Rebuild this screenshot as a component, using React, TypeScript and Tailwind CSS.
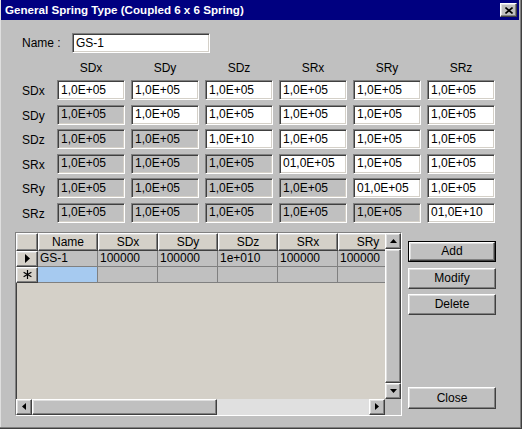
import React from 'react'

const font = { fontFamily: '"Liberation Sans", Arial, sans-serif' }

const LABELS = ['SDx', 'SDy', 'SDz', 'SRx', 'SRy', 'SRz']

// Matrix values, row by row. Cells below the diagonal are read-only (grey).
const VALUES: string[][] = [
  ['1,0E+05', '1,0E+05', '1,0E+05', '1,0E+05', '1,0E+05', '1,0E+05'],
  ['1,0E+05', '1,0E+05', '1,0E+05', '1,0E+05', '1,0E+05', '1,0E+05'],
  ['1,0E+05', '1,0E+05', '1,0E+10', '1,0E+05', '1,0E+05', '1,0E+05'],
  ['1,0E+05', '1,0E+05', '1,0E+05', '01,0E+05', '1,0E+05', '1,0E+05'],
  ['1,0E+05', '1,0E+05', '1,0E+05', '1,0E+05', '01,0E+05', '1,0E+05'],
  ['1,0E+05', '1,0E+05', '1,0E+05', '1,0E+05', '1,0E+05', '01,0E+10'],
]

const GRID_COLS = ['Name', 'SDx', 'SDy', 'SDz', 'SRx', 'SRy']
const GRID_ROW = ['GS-1', '100000', '100000', '1e+010', '100000', '100000']

const sunken =
  'border border-t-[#808080] border-l-[#808080] border-b-white border-r-white shadow-[inset_1px_1px_0_#404040,inset_-1px_-1px_0_#d4d0c8]'
const raised =
  'border border-t-white border-l-white border-b-[#404040] border-r-[#404040] shadow-[inset_-1px_-1px_0_#808080,inset_1px_1px_0_#dfdfdf]'

function Field({ value, editable, className = '' }: { value: string; editable: boolean; className?: string }) {
  return (
    <div
      className={`h-5 flex items-center pl-[3px] pb-[1px] text-[12px] text-black leading-none ${sunken} ${editable ? 'bg-white' : 'bg-[#c0c0c0]'} ${className}`}
    >
      {value}
    </div>
  )
}

function Button({ label, primary = false, className = '' }: { label: string; primary?: boolean; className?: string }) {
  if (primary) {
    return (
      <div className={`border border-black ${className}`}>
        <div className={`h-full flex items-center justify-center bg-[#c0c0c0] text-[12px] ${raised}`}>{label}</div>
      </div>
    )
  }
  return (
    <div className={`flex items-center justify-center bg-[#c0c0c0] text-[12px] ${raised} ${className}`}>{label}</div>
  )
}

function Arrow({ dir }: { dir: 'up' | 'down' | 'left' | 'right' }) {
  const pts = {
    up: '0,4 7,4 3.5,0',
    down: '0,0 7,0 3.5,4',
    left: '4,0 4,7 0,3.5',
    right: '0,0 0,7 4,3.5',
  }[dir]
  const vertical = dir === 'up' || dir === 'down'
  return (
    <svg width={vertical ? 7 : 4} height={vertical ? 4 : 7} viewBox={vertical ? '0 0 7 4' : '0 0 4 7'}>
      <polygon points={pts} fill="#000" />
    </svg>
  )
}

function ScrollBtn({ dir }: { dir: 'up' | 'down' | 'left' | 'right' }) {
  return (
    <div className={`w-4 h-4 shrink-0 flex items-center justify-center bg-[#c0c0c0] ${raised}`}>
      <Arrow dir={dir} />
    </div>
  )
}

function DataGrid() {
  return (
    <div className={`w-[387px] h-[184px] flex flex-col bg-[#d4d0c8] ${sunken}`}>
      <div className="flex flex-1 min-h-0">
        {/* cells */}
        <div className="flex-1 overflow-hidden">
          <div className="flex h-[18px] w-max">
            <div className={`w-[22px] h-full bg-[#d4d0c8] ${raised}`} />
            {GRID_COLS.map(c => (
              <div key={c} className={`w-[60px] h-full flex items-center justify-center bg-[#d4d0c8] text-[12px] ${raised}`}>
                {c}
              </div>
            ))}
          </div>
          <div className="flex h-4 w-max">
            <div className={`w-[22px] h-full flex items-center justify-center bg-[#d4d0c8] ${raised}`}>
              <svg width="5" height="9" viewBox="0 0 5 9">
                <polygon points="0,0 0,9 5,4.5" fill="#000" />
              </svg>
            </div>
            {GRID_ROW.map((v, i) => (
              <div
                key={i}
                className="w-[60px] h-full flex items-center pl-[2px] bg-[#c0c0c0] text-[12px] border-r border-b border-[#808080]"
              >
                {v}
              </div>
            ))}
          </div>
          <div className="flex h-4 w-max">
            <div className={`w-[22px] h-full flex items-center justify-center bg-[#d4d0c8] ${raised}`}>
              <svg width="9" height="9" viewBox="0 0 9 9" stroke="#000" strokeWidth="1.2">
                <line x1="4.5" y1="0" x2="4.5" y2="9" />
                <line x1="0.6" y1="2.2" x2="8.4" y2="6.8" />
                <line x1="0.6" y1="6.8" x2="8.4" y2="2.2" />
              </svg>
            </div>
            {GRID_ROW.map((_, i) => (
              <div
                key={i}
                className={`w-[60px] h-full border-r border-b border-[#808080] ${i === 0 ? 'bg-[#a6caf0]' : 'bg-[#c0c0c0]'}`}
              />
            ))}
          </div>
        </div>
        {/* vertical scrollbar */}
        <div className="w-4 flex flex-col">
          <ScrollBtn dir="up" />
          <div className={`flex-1 bg-[#c0c0c0] ${raised}`} />
          <ScrollBtn dir="down" />
        </div>
      </div>
      {/* horizontal scrollbar */}
      <div className="flex h-4">
        <ScrollBtn dir="left" />
        <div className={`w-[185px] h-full bg-[#c0c0c0] ${raised}`} />
        <div className="flex-1 h-full bg-[#e0e0e0]" />
        <ScrollBtn dir="right" />
        <div className="w-4 h-full bg-[#c0c0c0]" />
      </div>
    </div>
  )
}

export default function App() {
  return (
    <div
      style={font}
      className="w-[522px] h-[429px] flex flex-col bg-[#c0c0c0] text-black shadow-[inset_-1px_-1px_0_#404040,inset_-2px_-2px_0_#808080,inset_1px_0_0_#dfdfdf]"
    >
      {/* title bar */}
      <div className="ml-[1px] mr-[3px] h-5 flex items-center justify-between bg-[#000080] pl-[4px] pr-[2px]">
        <span className="text-white font-bold text-[11.6px] leading-none">General Spring Type (Coupled 6 x 6 Spring)</span>
        <div className={`w-[17px] h-[14px] flex items-center justify-center bg-[#c0c0c0] ${raised}`}>
          <svg width="8" height="7" viewBox="0 0 8 7" stroke="#000" strokeWidth="1.6">
            <line x1="0.5" y1="0.5" x2="7.5" y2="6.5" />
            <line x1="7.5" y1="0.5" x2="0.5" y2="6.5" />
          </svg>
        </div>
      </div>

      {/* name */}
      <div className="flex items-center mt-[13px] pl-[22px] h-5">
        <span className="w-[50px] text-[12px]">Name :</span>
        <Field value="GS-1" editable className="w-[138px]" />
      </div>

      {/* stiffness matrix */}
      <div className="mt-[8px] ml-[22px] grid grid-cols-[29px_repeat(6,68px)] grid-rows-[14.5px_repeat(6,20px)] gap-x-[6px] gap-y-[4.5px] text-[12px]">
        <div />
        {LABELS.map(l => (
          <div key={l} className="flex items-center justify-center leading-none">
            {l}
          </div>
        ))}
        {VALUES.map((row, r) => (
          <React.Fragment key={r}>
            <div className="flex items-center leading-none pt-[2px]">{LABELS[r]}</div>
            {row.map((v, c) => (
              <Field key={c} value={v} editable={c >= r} />
            ))}
          </React.Fragment>
        ))}
      </div>

      {/* list + actions */}
      <div className="flex mt-[9px] ml-[15px]">
        <DataGrid />
        <div className="ml-[6px] w-[88px] flex flex-col pt-[9px] pb-[7px]">
          <Button label="Add" primary className="h-[21px]" />
          <Button label="Modify" className="h-[21px] mt-[6px]" />
          <Button label="Delete" className="h-[21px] mt-[5px]" />
          <Button label="Close" className="h-[22px] mt-auto" />
        </div>
      </div>
    </div>
  )
}
